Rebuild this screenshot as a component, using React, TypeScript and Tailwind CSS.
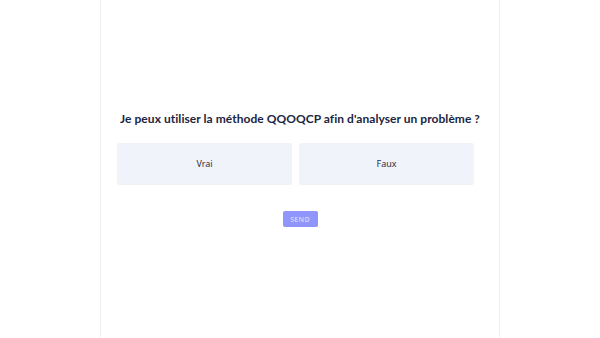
export default function App() {
  return (
    <div className="w-full h-[338px] bg-white flex justify-center" style={{ fontFamily: 'Lato, "Noto Sans", sans-serif' }}>
      <div className="w-[400px] h-full border-x border-[#f0f0f0] flex flex-col">
        <div className="h-[109px]" />
        <h1 className="text-center text-[12px] font-bold text-[#1c2541] leading-[20px] whitespace-nowrap tracking-[0.05px]">
          Je peux utiliser la méthode QQOQCP afin d'analyser un problème ?
        </h1>
        <div className="ml-[16px] mr-[25px] mt-[14px] flex gap-[7px]">
          <button className="w-[175px] h-[41px] bg-[#f0f3fa] rounded-[2px] shadow-[0_1px_1px_rgba(0,0,0,0.06)] text-[9px] text-[#2a2f45]" style={{ fontFamily: '"Noto Sans", sans-serif' }}>Vrai</button>
          <button className="w-[175px] h-[41px] bg-[#f0f3fa] rounded-[2px] shadow-[0_1px_1px_rgba(0,0,0,0.06)] text-[9px] text-[#2a2f45]" style={{ fontFamily: '"Noto Sans", sans-serif' }}>Faux</button>
        </div>
        <div className="mt-[27px] flex justify-center">
          <button className="w-[35px] h-[16px] bg-[#8f95fb] rounded-[2px] text-[7px] font-semibold tracking-[0.3px] text-[#d4d7ff] leading-none" style={{ fontFamily: '"Noto Sans", sans-serif' }}>SEND</button>
        </div>
      </div>
    </div>
  );
}
